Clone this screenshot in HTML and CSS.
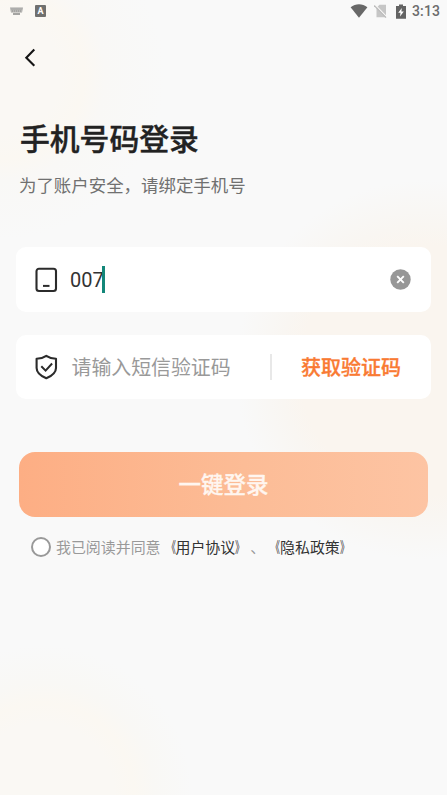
FILE: index.html
```html
<!DOCTYPE html>
<html lang="zh-CN">
<head>
<meta charset="utf-8">
<meta name="viewport" content="width=device-width, initial-scale=1">
<title>手机号码登录</title>
<link rel="stylesheet" href="styles.css">
</head>
<body>
<div class="screen">
  <div class="status">
    <svg class="keyboard" width="15" height="9" viewBox="0 0 15 9"><path d="M1 .5h13l-1 5H2z" fill="#a4a4a2"/><path d="M4 6h7v2H4z" fill="#a4a4a2"/><path d="M1.500 2h12M2 4h11" stroke="#deddda" stroke-width=".7" stroke-dasharray="1 1"/></svg>
    <span class="ime">A</span>
    <svg class="wifi" width="18" height="14" viewBox="0 0 18 14"><path d="M9 13.700.6 3.300C5.600-.7 12.400-.7 17.400 3.300z" fill="#686868"/></svg>
    <svg class="sim" width="13" height="14" viewBox="0 0 13 14"><path d="M2.500 3.800 5.500.8H12v12.400H2.500z" fill="#c6c6c6"/><path d="M1.200.8 13 13" stroke="#f9f8f7" stroke-width="1.200"/><path d="M.2 1.500 12 13.600" stroke="#bdbdbd" stroke-width="1.200"/></svg>
    <svg class="battery" width="10" height="15" viewBox="0 0 10 15"><path d="M3 .5h4V2h3v12.700H0V2h3z" fill="#636363"/><path d="M5.800 4 2.200 8.800h2.300L4 12.500l3.800-5H5.400z" fill="#fff"/></svg>
    <time class="clock">3:13</time>
  </div>
  <header class="nav">
    <svg width="12" height="20" viewBox="0 0 12 20"><path d="M10.300 1.600 2.300 9.800l8 8" fill="none" stroke="#151515" stroke-width="2.100"/></svg>
  </header>
  <main>
    <h1 class="title">手机号码登录</h1>
    <p class="subtitle">为了账户安全，请绑定手机号</p>
    <section class="field phone">
      <svg class="icon" width="23" height="26" viewBox="0 0 23 26"><rect x="1.500" y="1.800" width="19.500" height="22.200" rx="2.500" fill="none" stroke="#2b2b2b" stroke-width="2.100"/><path d="M8 18.900h6.500" stroke="#2b2b2b" stroke-width="2"/></svg>
      <span class="number">007</span><span class="caret"></span>
      <svg class="clear" width="21" height="21" viewBox="0 0 21 21"><circle cx="10.500" cy="10.500" r="10.200" fill="#979797"/><path d="m7.200 7.200 6.600 6.600m0-6.600-6.600 6.600" stroke="#fff" stroke-width="1.900"/></svg>
    </section>
    <section class="field code">
      <svg class="icon" width="23" height="26" viewBox="0 0 23 26"><path d="M11.300 1.900C8.400 3.900 5 4.700 1.600 4.800v9.100c0 5 5 8.300 9.700 10.400 4.700-2.100 9.700-5.400 9.700-10.400V4.800c-3.400-.1-6.800-.9-9.700-2.900z" fill="none" stroke="#2b2b2b" stroke-width="2.100" stroke-linejoin="round"/><path d="m6.300 12.300 4.300 4.300 6.500-7.100" fill="none" stroke="#2b2b2b" stroke-width="2"/></svg>
      <span class="placeholder">请输入短信验证码</span>
      <span class="divider"></span>
      <span class="send">获取验证码</span>
    </section>
    <div class="submit">一键登录</div>
    <div class="agreement">
      <span class="radio"></span>
      <span>我已阅读并同意<span class="link"><span class="open">《</span>用户协议<span class="close">》</span></span>、<span class="link"><span class="open">《</span>隐私政策<span class="close">》</span></span></span>
    </div>
  </main>
</div>
</body>
</html>
```
FILE: styles.css
```css
* {
  box-sizing: border-box;
}

body {
  margin: 0;
  font-family: "Noto Sans CJK SC", sans-serif;
  text-spacing-trim: space-all;
}

.screen {
  height: 795px;
  overflow: hidden;
  background:
    radial-gradient(circle at 42px 795px, #faf8f4 0 72px, #fbf8f2 92px, #f9f8f5 112px, rgba(249, 249, 249, 0) 150px),
    radial-gradient(circle at 0 75px, #faf8f4 0 60px, #fbf8f2 84px, #f9f8f6 105px, rgba(249, 249, 249, 0) 165px),
    radial-gradient(circle at 425px 370px, #faf5ef 0 125px, #f9f6f2 145px, rgba(249, 249, 249, 0) 190px),
    #f9f9f9;
}

.status {
  display: flex;
  align-items: center;
  height: 22px;
  padding: 0 7px 0 9px;
}

.ime {
  width: 11px;
  height: 12px;
  margin-left: 11px;
  border-radius: 1px;
  background: #70706e;
  color: #fff;
  font: bold 9px/12px Roboto, sans-serif;
  text-align: center;
}

.wifi {
  margin-left: auto;
}

.sim {
  margin-left: 6px;
}

.battery {
  margin-left: 9px;
}

.clock {
  width: 28px;
  margin-left: 6px;
  color: #6c6c6c;
  font: 500 14px/22px Roboto, sans-serif;
  letter-spacing: 0.15px;
  white-space: nowrap;
}

.nav {
  height: 72px;
  padding: 26px 0 0 24px;
}

.nav svg {
  display: block;
}

main {
  padding: 21px 16px 0;
}

.title {
  margin: 0 0 0 4px;
  color: #222;
  font-size: 29.8px;
  font-weight: 500;
  line-height: 44px;
  -webkit-text-stroke: 0.4px #222;
}

.subtitle {
  margin: 13px 0 0 3px;
  color: #707070;
  font-size: 17.45px;
  line-height: 26px;
}

.field {
  display: flex;
  align-items: center;
  height: 65px;
  padding: 0 20px 0 19px;
  border-radius: 10px;
  background: #fff;
}

.phone {
  margin-top: 49px;
}

.number {
  margin-left: 12px;
  color: #333;
  font: 20px/30px Roboto, sans-serif;
}

.caret {
  width: 3px;
  height: 27px;
  margin-left: -2px;
  background: #138779;
}

.clear {
  margin-left: auto;
}

.code {
  height: 64px;
  margin-top: 23px;
  padding-right: 30px;
}

.placeholder {
  margin-left: 13.5px;
  color: #999;
  font-size: 19.9px;
  line-height: 30px;
}

.divider {
  width: 2px;
  height: 26px;
  margin-left: auto;
  background: #e8e8e8;
}

.send {
  margin-left: 29px;
  color: #f97a33;
  font-size: 20px;
  font-weight: 500;
  line-height: 30px;
  -webkit-text-stroke: 0.3px #f97a33;
}

.submit {
  height: 65px;
  margin: 53px 3px 0;
  border-radius: 16px;
  background: linear-gradient(90deg, #fdae84, #fcbc96 55%, #fdc4a3);
  color: #fff6f0;
  font-size: 22.5px;
  font-weight: 500;
  line-height: 62px;
  text-align: center;
  -webkit-text-stroke: 0.3px #fff6f0;
}

.agreement {
  display: flex;
  align-items: center;
  gap: 5px;
  height: 24px;
  margin: 18px 0 0 15px;
  color: #999;
  font-size: 14.95px;
  line-height: 24px;
  white-space: nowrap;
}

.radio {
  width: 20px;
  height: 20px;
  border: 2px solid #999;
  border-radius: 50%;
  background: #fff;
}

.link {
  color: #333;
}

.open,
.close {
  display: inline-block;
  transform: scaleX(0.62);
}

.open {
  transform-origin: right;
}

.close {
  transform-origin: left;
}
```
